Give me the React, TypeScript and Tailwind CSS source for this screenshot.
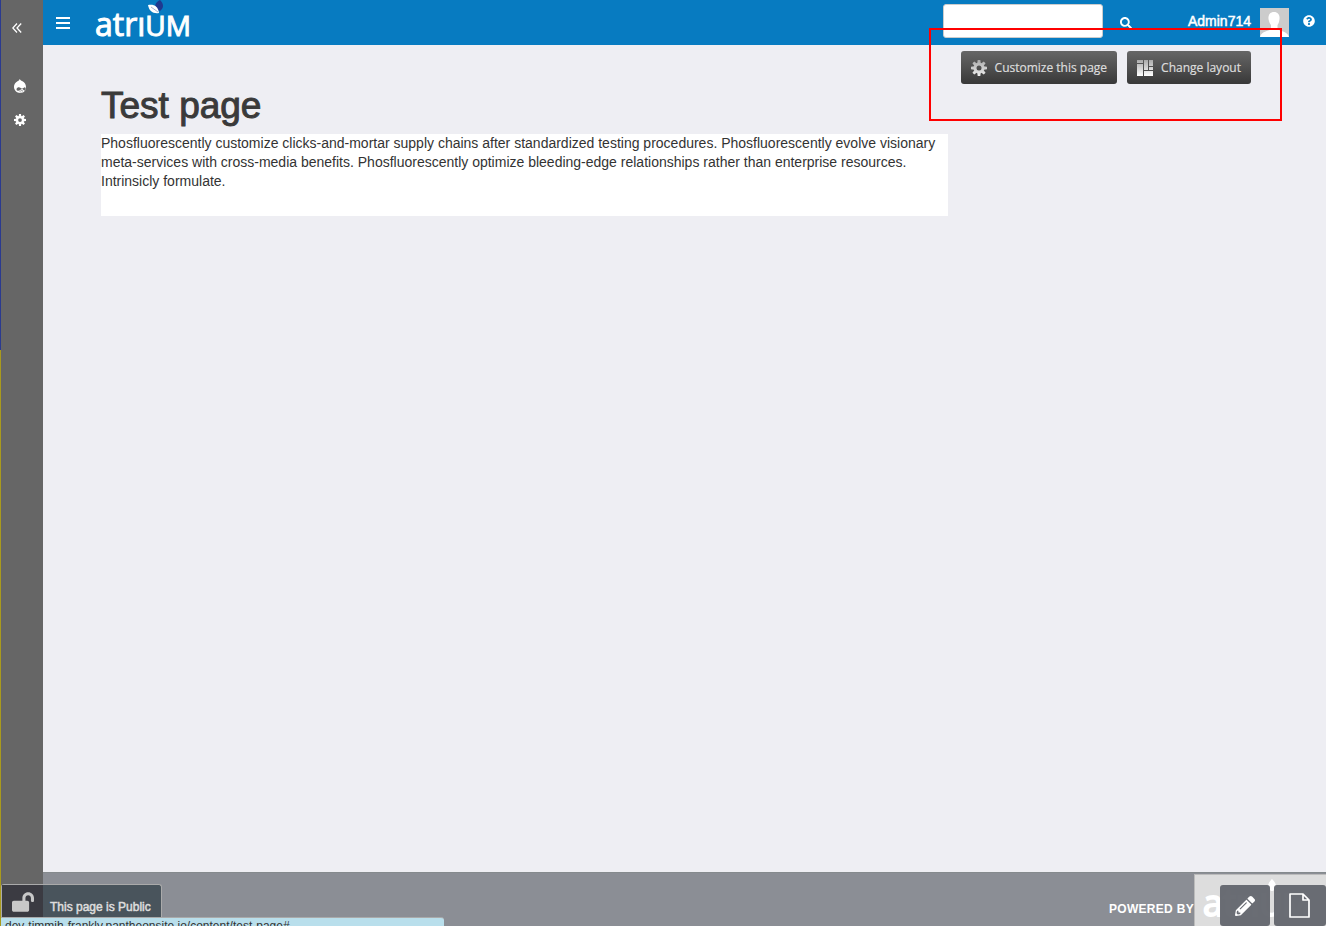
import { FaDrupal, FaLockOpen, FaPencilAlt, FaQuestionCircle, FaSearch } from "react-icons/fa";

const TEETH = [0, 45, 90, 135, 180, 225, 270, 315];

function Leaves({ className, tint }: { className: string; tint: string }) {
  return (
    <svg viewBox="0 0 16 14" className={className} aria-hidden="true">
      <path d="M8 9C6 5 8 2 12 0c4 4 4 8 0 11z" fill={tint} />
      <path d="M0 5c6-1 10 1 11 8C5 14 1 11 0 5z" fill="#fff" />
      <path d="M3 7l7 5" stroke={tint} strokeWidth=".4" />
    </svg>
  );
}

function HeaderLogo() {
  return (
    <span className="relative block whitespace-nowrap font-['Open_Sans',sans-serif] text-[32px] leading-8 text-white [-webkit-text-stroke:1px]">
      atrı<span className="text-[28px]">UM</span>
      <Leaves className="absolute -top-2 left-[53px] h-3.5 w-4" tint="#20398f" />
    </span>
  );
}

function FooterLogo() {
  return (
    <span className="relative block whitespace-nowrap font-['Open_Sans',sans-serif] text-4xl leading-9 text-white [-webkit-text-stroke:2px]">
      atrı<span className="text-[31px]">UM</span>
      <svg viewBox="0 0 10 12" className="absolute -top-1.5 left-16 h-3 w-2.5" aria-hidden="true">
        <path d="M5 0c4 4 6 8 1 12H4C-1 8 1 4 5 0z" fill="#fff" />
      </svg>
    </span>
  );
}

function GearIcon({ id, from, to, className }: { id: string; from: string; to: string; className: string }) {
  return (
    <svg viewBox="0 0 16 16" className={className} aria-hidden="true">
      <defs>
        <linearGradient id={`${id}-fill`} gradientUnits="userSpaceOnUse" x1="0" y1="0" x2="0" y2="16">
          <stop offset="0" stopColor={from} />
          <stop offset="1" stopColor={to} />
        </linearGradient>
        <mask id={`${id}-mask`}>
          {TEETH.map((angle) => (
            <path key={angle} d="M6.700 0h2.600l.7 5H6z" fill="#fff" transform={`rotate(${angle} 8 8)`} />
          ))}
          <circle cx="8" cy="8" r="5.400" fill="#fff" />
          <circle cx="8" cy="8" r="2.500" fill="#000" />
        </mask>
      </defs>
      <rect width="16" height="16" fill={`url(#${id}-fill)`} mask={`url(#${id}-mask)`} />
    </svg>
  );
}

function LayoutIcon() {
  return (
    <svg viewBox="0 0 16 16" className="size-4" aria-hidden="true">
      <defs>
        <linearGradient id="tiles" gradientUnits="userSpaceOnUse" x1="0" y1="0" x2="0" y2="16">
          <stop offset="0" stopColor="#aaa" />
          <stop offset="1" stopColor="#fff" />
        </linearGradient>
      </defs>
      <path d="M0 0h6v3H0zM0 4h6v12H0zM7 0h4v10H7zM12 0h4v6h-4zM12 7h4v3h-4zM7 11h9v5H7z" fill="url(#tiles)" />
    </svg>
  );
}

const toolButton =
  "flex h-[33px] items-center gap-2 rounded-[3px] bg-linear-to-b from-[#666] via-[#505050] to-[#383838] px-2.5 font-['Open_Sans',sans-serif] text-[12px] text-[#ddd] [-webkit-text-stroke:0.2px]";

export default function App() {
  return (
    <div className="relative flex min-h-screen overflow-hidden bg-[#eeeef3] font-['Liberation_Sans',Arial,sans-serif] text-sm text-[#333]">
      <nav aria-label="Administration" className="flex w-[43px] shrink-0 flex-col items-center border-l border-[#a99a1d] bg-[#666] pr-1 text-white">
        <button aria-label="Collapse" className="mt-5 flex h-4 w-8 items-center pl-2">
          <svg viewBox="0 0 10 10" className="size-2.5 fill-none stroke-white" strokeWidth="1.3" aria-hidden="true">
            <path d="M5 .5.8 5 5 9.500M9.200.5 5 5l4.200 4.500" />
          </svg>
        </button>
        <button aria-label="Site menu" className="mt-[42px]"><FaDrupal className="size-4" /></button>
        <button aria-label="Settings" className="mt-5">
          <GearIcon id="settings" from="#fff" to="#fff" className="size-3" />
        </button>
      </nav>
      <div className="absolute left-0 top-0 h-[350px] w-px bg-[#2a3a90]" />

      <div className="flex min-w-0 flex-1 flex-col">
        <header className="flex h-[45px] items-center bg-[#077bc1] text-white">
          <button aria-label="Menu" className="ml-[13px]">
            <svg viewBox="0 0 14 12" className="h-3 w-3.5" fill="#fff" aria-hidden="true">
              <path d="M0 0h14v2H0zM0 5h14v2H0zM0 10h14v2H0z" />
            </svg>
          </button>
          <a href="#" aria-label="atrium" className="ml-[25px] mt-1"><HeaderLogo /></a>
          <form className="ml-auto flex items-center" role="search">
            <input aria-label="Search" className="mb-1 h-[34px] w-40 rounded-[3px] border border-[#ccc] bg-white px-2 text-[#333]" />
            <button type="button" aria-label="Submit search" className="ml-[17px]"><FaSearch className="size-3" /></button>
          </form>
          <a href="#" className="mb-1 ml-14 text-sm [-webkit-text-stroke:0.5px]">Admin714</a>
          <svg viewBox="0 0 29 29" className="ml-[9px] size-[29px]" role="img" aria-label="Avatar">
            <path d="M0 0h29v29H0z" fill="#ccc" />
            <path d="M14 4c4 0 6 3 5.500 7-.3 3-1 5-2 6v4c1 2 10 2 11.500 8H0c1-6 10-6 11-8v-4c-1-1-2-3-2.500-6C8 7 10 4 14 4z" fill="#fff" />
          </svg>
          <a href="#" aria-label="Help" className="mb-1 ml-3.5 mr-[11px]"><FaQuestionCircle className="size-3" /></a>
        </header>

        <main className="flex-1">
          <div className="flex justify-end gap-2.5 pr-[75px] pt-1.5">
            <button className={toolButton}><GearIcon id="customize" from="#aaa" to="#eee" className="size-4" />Customize this page</button>
            <button className={toolButton}><LayoutIcon />Change layout</button>
          </div>
          <div className="px-[58px]">
            <h1 className="pb-1.5 text-[37px] leading-[44px] text-[#3a3a3a] [-webkit-text-stroke:1px]">Test page</h1>
            <p className="max-w-[847px] bg-white pb-[25px] leading-[19px]">
              Phosfluorescently customize clicks-and-mortar supply chains after standardized testing procedures. Phosfluorescently evolve visionary meta-services with cross-media benefits. Phosfluorescently optimize bleeding-edge relationships rather than enterprise resources. Intrinsicly formulate.
            </p>
          </div>
        </main>

        <footer className="flex h-[54px] items-end justify-end border-t border-[#858a8d] bg-[#8b8e95]">
          <span className="pb-2 text-[12px] font-bold tracking-wide text-white">POWERED BY</span>
          <a href="#" aria-label="atrium" className="flex h-[52px] w-[132px] items-end border-l border-t border-[#bbb] bg-[#ddd] pb-1 pl-2"><FooterLogo /></a>
        </footer>
      </div>

      <div className="pointer-events-none absolute right-11 top-7 h-[93px] w-[353px] border-2 border-[#f00]" />

      <div className="absolute bottom-0 left-px flex h-[42px] w-[161px] rounded-t-[3px] border border-b-0 border-[#aaa] bg-[#49545c] text-[#ddd]">
        <div className="w-[41px] bg-[#3b3b42] pl-2.5 pt-1.5"><FaLockOpen className="size-[22px] text-[#c8c8c8]" /></div>
        <span className="whitespace-nowrap pl-[7px] pt-3.5 text-[12px] leading-4 [-webkit-text-stroke:0.5px]">This page is Public</span>
      </div>
      <div className="absolute bottom-0 left-px h-[9px] w-[443px] overflow-hidden rounded-tr-[3px] border-t border-[#aaa] bg-[#b9dfec] pl-1 text-[12px] leading-4 text-[#333]">
        dev-timmih-frankly.pantheonsite.io/content/test-page#
      </div>

      <div className="absolute bottom-0 right-0 flex gap-1">
        <button aria-label="Edit" className="flex h-[41px] w-[50px] items-center justify-center rounded-[3px] bg-[#62656d]/95 text-white"><FaPencilAlt className="size-5" /></button>
        <button aria-label="New page" className="flex h-[41px] w-[52px] items-center justify-center rounded-[3px] bg-[#62656d]/95 pr-0.5 text-white">
          <svg viewBox="0 0 21 25" className="h-[25px] w-[21px] fill-none stroke-white" strokeWidth="1.700" strokeLinejoin="round" aria-hidden="true">
            <path d="M1 1h13l6 6v17H1zM14 1v6h6" />
          </svg>
        </button>
      </div>
    </div>
  );
}
